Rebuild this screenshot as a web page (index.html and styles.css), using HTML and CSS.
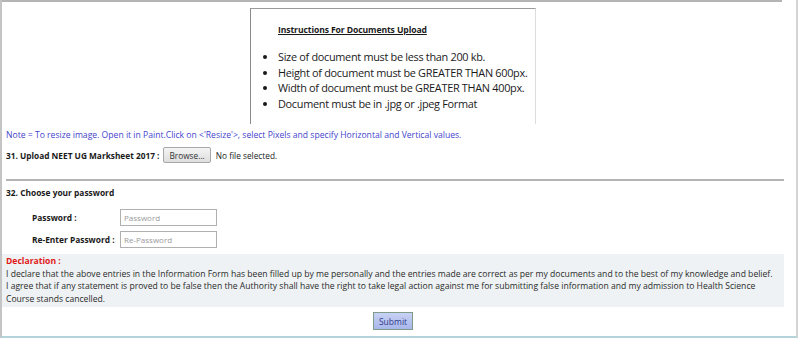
FILE: index.html
```html
<!DOCTYPE html>
<html>
<head>
<meta charset="utf-8">
<link rel="stylesheet" href="styles.css">
</head>
<body>
<div class="page">
  <div class="content">
    <div class="rule top"></div>
    <div class="instr-wrap">
      <div class="instr">
        <div class="instr-title">Instructions For Documents Upload</div>
        <ul class="instr-list">
          <li>Size of document must be less than 200 kb.</li>
          <li>Height of document must be GREATER THAN 600px.</li>
          <li>Width of document must be GREATER THAN 400px.</li>
          <li>Document must be in .jpg or .jpeg Format</li>
        </ul>
      </div>
    </div>
    <p class="note">Note = To resize image. Open it in Paint.Click on &lt;'Resize'&gt;, select Pixels and specify Horizontal and Vertical values.</p>
    <div class="upload">
      <span class="lbl">31. Upload NEET UG Marksheet 2017 :</span>
      <span class="browse">Browse...</span>
      <span class="nofile">No file selected.</span>
    </div>
    <div class="rule mid"></div>
    <div class="sect">32. Choose your password</div>
    <div class="pw">
      <span class="lbl">Password :</span>
      <span class="inp">Password</span>
      <span class="lbl">Re-Enter Password :</span>
      <span class="inp">Re-Password</span>
    </div>
    <div class="decl">
      <div class="decl-title">Declaration :</div>
      <div>I declare that the above entries in the Information Form has been filled up by me personally and the entries made are correct as per my documents and to the best of my knowledge and belief.</div>
      <div>I agree that if any statement is proved to be false then the Authority shall have the right to take legal action against me for submitting false information and my admission to Health Science Course stands cancelled.</div>
    </div>
    <div class="submit-row"><span class="submit">Submit</span></div>
  </div>
</div>
</body>
</html>
```
FILE: styles.css
```css
html, body { margin: 0; padding: 0; background: #fff; }
body { font-family: "Open Sans", "DejaVu Sans", sans-serif; color: #222; }
.page {
  width: 794px;
  height: 336px;
  border-left: 2px solid #c4c4c4;
  border-right: 2px solid #d4d4d4;
  border-bottom: 2px solid #b5d3da;
  overflow: hidden;
}
.content { width: 782px; }
.rule { height: 2px; background: #b4b4b4; }
.rule.top { margin-right: 2px; }
.instr-wrap { display: flex; justify-content: center; padding-top: 6px; }
.instr {
  width: 286px;
  height: 116px;
  border-top: 1px solid #9a9a9a;
  border-left: 1px solid #8a8a8a;
  border-right: 1px solid #dcdcdc;
  box-sizing: border-box;
  font-family: "Open Sans", sans-serif;
  color: #1a1a1a;
  overflow: hidden;
}
.instr-title {
  font-size: 8.6px;
  font-weight: 700;
  text-decoration: underline;
  margin: 15px 0 0 27px;
  letter-spacing: -0.1px;
}
.instr-list {
  margin: 13px 0 0 0;
  padding-left: 27px;
  font-size: 10.9px;
  line-height: 15.7px;
  letter-spacing: -0.3px;
  white-space: nowrap;
}
.instr-list li { list-style: disc; }
.note {
  margin: 5px 0 0 4px;
  font-size: 8.6px;
  color: #4444cc;
  white-space: nowrap;
}
.upload {
  display: flex;
  align-items: center;
  margin: 6px 0 0 4px;
  font-size: 8.3px;
  height: 16px;
}
.lbl { font-weight: 700; color: #1a1a1a; }
.browse {
  margin-left: 4px;
  height: 14px;
  padding: 0 5px;
  border: 1px solid #a8a8a8;
  border-radius: 2px;
  background: linear-gradient(#f4f4f4, #dedede);
  display: flex; align-items: center;
  color: #333;
}
.nofile { margin-left: 5px; color: #222; }
.rule.mid { margin: 16px 0 0 4px; }
.sect { margin: 6px 0 0 4px; font-size: 8.4px; font-weight: 700; color: #1a1a1a; }
.pw {
  display: grid;
  grid-template-columns: 88px 97px;
  row-gap: 5px;
  align-items: center;
  margin: 11px 0 0 30px;
  font-size: 8.4px;
}
.inp {
  height: 17px;
  box-sizing: border-box;
  border: 1px solid #b0b0b0;
  padding-left: 3px;
  color: #9a9a9a;
  display: flex; align-items: center;
  font-size: 8px;
}
.decl {
  margin: 6px 0 0 0;
  background: #eef2f4;
  padding: 1px 4px 2px 4px;
  font-size: 8.6px;
  line-height: 12.5px;
  color: #2a2a2a;
}
.decl-title { color: #e01818; font-weight: 700; }
.submit-row { display: flex; justify-content: center; margin-top: 5px; }
.submit {
  width: 40px;
  height: 18px;
  box-sizing: border-box;
  border: 1px solid #7d9c8a;
  background: linear-gradient(#c9d2f4, #a8b6ea);
  color: #2d3a8c;
  font-size: 8.5px;
  display: flex; align-items: center; justify-content: center;
}
```
